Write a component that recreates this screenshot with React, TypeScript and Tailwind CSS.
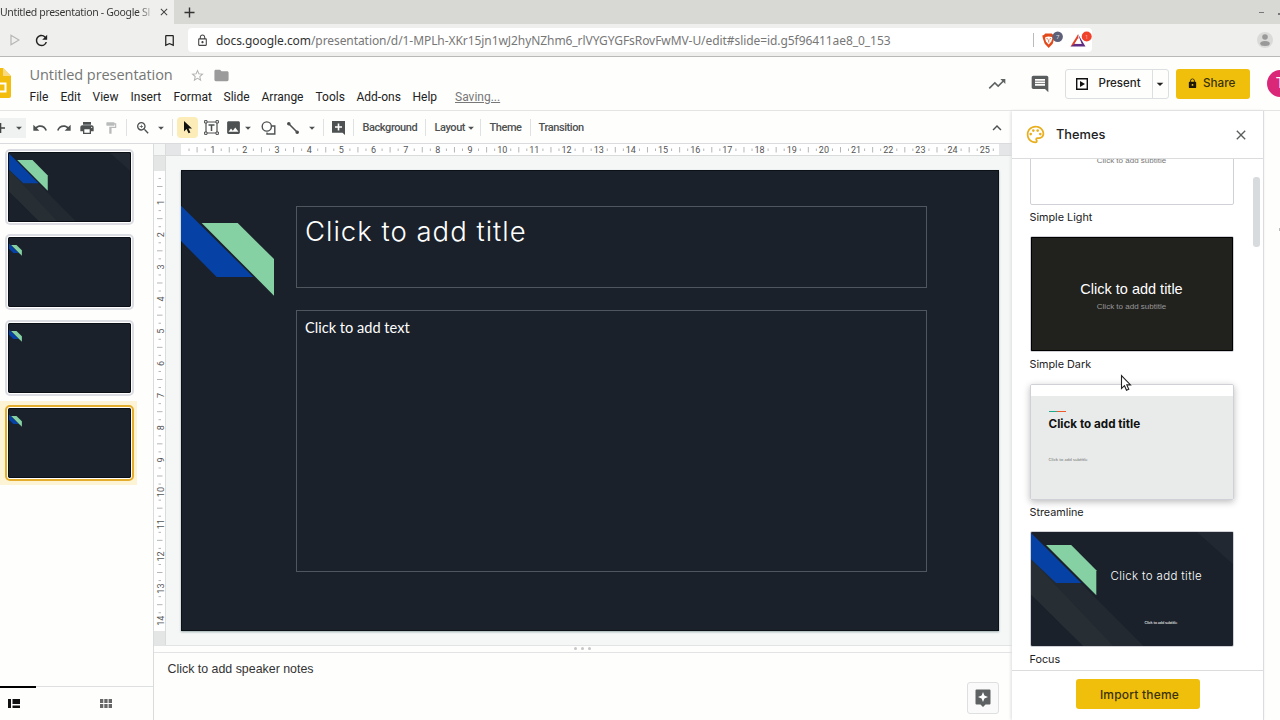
import type { ReactNode } from 'react';
import {
  MdArrowDropDown,
  MdBookmarkBorder,
  MdClose,
  MdExpandLess,
  MdFolder,
  MdFormatPaint,
  MdImage,
  MdInsertComment,
  MdLock,
  MdLockOutline,
  MdOutlinePalette,
  MdPrint,
  MdRedo,
  MdRefresh,
  MdStarBorder,
  MdTrendingUp,
  MdUndo,
  MdZoomIn,
} from 'react-icons/md';

const UNIT = 32.17;

const menus = [
  { label: 'File', width: 'w-[31px]' },
  { label: 'Edit', width: 'w-[32px]' },
  { label: 'View', width: 'w-[38px]' },
  { label: 'Insert', width: 'w-[43px]' },
  { label: 'Format', width: 'w-[50px]' },
  { label: 'Slide', width: 'w-[38px]' },
  { label: 'Arrange', width: 'w-[54px]' },
  { label: 'Tools', width: 'w-[41px]' },
  { label: 'Add-ons', width: 'w-[56px]' },
  { label: 'Help', width: 'w-[42.500px]' },
];

function BrowserChrome() {
  return (
    <div className="h-[57px] shrink-0 border-b border-[#b9bab8] bg-[#efefed] font-['Noto_Sans']">
      <div className="flex h-6 bg-[#d8d9d5]">
        <div className="flex w-[174px] items-center bg-[#efefed]">
          <span className="w-[153px] whitespace-nowrap bg-gradient-to-r from-[#333] from-90% to-[#ddd] bg-clip-text pt-px text-[10.5px] tracking-[-0.33px] text-transparent">
            Untitled presentation - Google Sl
          </span>
          <MdClose className="ml-[5px] h-3 w-3 text-[#444]" />
        </div>
        <svg className="ml-[10px] mt-[7px] h-[11px] w-[11px]" viewBox="0 0 11 11" stroke="#333" strokeWidth="1.4">
          <path d="M5.5 0.5v10M0.5 5.5h10" />
        </svg>
        <span className="ml-auto mr-[14px] mt-3 h-px w-[5px] bg-[#777]" />
        <span className="-mr-px mt-[13px] h-[2px] w-[3px] bg-[#777]" />
      </div>
      <div className="flex h-8 items-center">
        <svg className="ml-[10px] h-3 w-[10px]" viewBox="0 0 10 12" fill="none" stroke="#b5b5b5" strokeWidth="1.2">
          <path d="M1 1.2v9.6L9 6z" />
        </svg>
        <MdRefresh className="ml-[13px] h-[17px] w-[17px] text-[#222]" />
        <MdBookmarkBorder className="ml-[112px] h-[15px] w-[15px] text-[#222]" />
        <div className="ml-[11px] flex h-6 w-[904px] items-center rounded-sm bg-white">
          <MdLockOutline className="ml-[8px] h-[13px] w-[13px] text-[#444]" />
          <span className="ml-[7px] whitespace-nowrap pt-px text-[12px] tracking-[-0.07px] text-[#777]">
            <span className="text-[#333]">docs.google.com</span>
            /presentation/d/1-MPLh-XKr15jn1wJ2hyNZhm6_rlVYGYGFsRovFwMV-U/edit#slide=id.g5f96411ae8_0_153
          </span>
          <span className="ml-auto h-[14px] w-px bg-[#bbb]" />
          <svg className="ml-[8px] h-[18px] w-[24px]" viewBox="0 0 24 18">
            <path d="M3.300 2.500h6.600l1.300 1.500 1.600.3-.6 3.200-1.500 5.300L6.700 17l-4-4.200L.9 7.500.3 4.500l1.600-.5z" fill="#e24a1c" />
            <path d="M3.500 6l3.200-.6L10 6l.3 1.500-1 3L6.700 13.500 4 10.500l-.9-3z" fill="#fff" />
            <path d="M4.500 7.500l1.500.6M9 7.500l-1.500.6M6.700 8.500v3" stroke="#e24a1c" strokeWidth=".8" />
            <circle cx="15.700" cy="5.700" r="5.200" fill="#5d6079" />
            <text x="14" y="8" fontSize="6" fill="#ddd">7</text>
          </svg>
          <svg className="ml-[4px] h-[18px] w-[22px]" viewBox="0 0 22 18">
            <path d="M8.200 3.500L15.500 15.500H0.500l3-2.800h8z" fill="#612c83" />
            <path d="M8.200 3L.5 15.500l4.300-2.800 3.600-5.500z" fill="#e2452a" />
            <path d="M8.200 7l3.600 5.700H4.600z" fill="#fff" />
            <circle cx="16.700" cy="5.500" r="5" fill="#f0412b" />
            <text x="15.200" y="7.500" fontSize="5" fill="#fbb">1</text>
          </svg>
        </div>
        <svg className="ml-auto mr-[7px] h-4 w-4" viewBox="0 0 16 16">
          <circle cx="8" cy="8" r="8" fill="#dadad8" />
          <circle cx="8" cy="5" r="2.800" fill="#999" />
          <ellipse cx="8" cy="11.500" rx="4.800" ry="2.500" fill="#999" />
        </svg>
      </div>
    </div>
  );
}

function Header() {
  return (
    <div className="flex h-[54px] shrink-0 border-b border-[#e3e5e5]">
      <svg className="mt-[11px] h-[31px] w-3" viewBox="0 0 12 31">
        <path d="M0 0h3l8 8v20q0 2-2 2H0z" fill="#f2bd0c" />
        <path d="M3 0l8 8H3z" fill="#f9da80" />
        <path d="M0 15.500h5.500v8H0" fill="none" stroke="#fff" strokeWidth="2" />
      </svg>
      <div className="ml-[17.500px]">
        <div className="flex h-[30px] items-center pt-[6px]">
          <span className="w-[143px] whitespace-nowrap font-['Open_Sans'] text-[14.500px] tracking-[-0.06px] text-[#757775]">
            Untitled presentation
          </span>
          <MdStarBorder className="ml-[17px] h-[15px] w-[15px] text-[#b3b3b3]" />
          <MdFolder className="ml-[8px] h-[17px] w-[17px] text-[#9b9b9b]" />
        </div>
        <div className="flex h-5 items-center font-['Roboto'] text-[12px] text-[#222]">
          {menus.map((menu) => (
            <span key={menu.label} className={`${menu.width} whitespace-nowrap`}>
              {menu.label}
            </span>
          ))}
          <span className="text-[#777] underline">Saving...</span>
        </div>
      </div>
      <div className="ml-auto flex items-center">
        <MdTrendingUp className="h-[20px] w-[20px] text-[#5f6363]" />
        <MdInsertComment className="ml-[23px] h-[20px] w-[20px] text-[#5a5d5d]" />
        <div className="ml-[15px] flex h-[30px] w-[104px] items-center rounded-[3px] border border-[#dcdfe1] font-['Inter'] text-[11.500px] font-medium text-[#222]">
          <svg className="ml-[10px] h-3 w-3" viewBox="0 0 12 12">
            <path d="M.7.7h10.600v10.600H.7z" fill="none" stroke="#111" strokeWidth="1.400" />
            <path d="M4 3l5 3-5 3z" fill="#111" />
          </svg>
          <span className="ml-[10.500px] w-[53.500px]">Present</span>
          <span className="flex h-full w-4 items-center border-l border-[#dcdfe1]">
            <MdArrowDropDown className="-ml-px h-4 w-4 shrink-0" />
          </span>
        </div>
        <div className="ml-[7px] flex h-[30px] w-[74px] items-center rounded-[3px] bg-[#f0bf0c] font-['Inter'] text-[11.700px] font-medium text-[#3a3208]">
          <MdLock className="ml-[11px] h-[11px] w-[11px] text-[#1c1804]" />
          <span className="ml-[5px]">Share</span>
        </div>
        <div className="-mr-[14px] ml-[17px] flex h-[27px] w-[27px] items-center rounded-full bg-[#db2777] pl-[9px] font-['Roboto'] text-[14px] text-white">
          T
        </div>
      </div>
    </div>
  );
}

function Divider({ className }: { className: string }) {
  return <span className={`h-[17px] w-px shrink-0 bg-[#dfe1e2] ${className}`} />;
}

function Toolbar() {
  return (
    <div className="flex h-[33px] shrink-0 items-center whitespace-nowrap border-b border-[#d9dbdc] pt-px font-['Roboto'] text-[11px] font-medium tracking-[-0.42px] text-[#4e5151]">
      <div className="flex h-[20px] w-[26px] shrink-0 items-center bg-[#f0f1f1]">
        <svg className="h-[10px] w-[5px]" viewBox="0 0 5 10" stroke="#444" strokeWidth="1.600">
          <path d="M0 5h5M0.500 0v10" />
        </svg>
        <MdArrowDropDown className="ml-[7px] h-[14px] w-[14px] shrink-0" />
      </div>
      <MdUndo className="ml-[6px] h-4 w-4 shrink-0" />
      <MdRedo className="ml-[8px] h-4 w-4 shrink-0" />
      <MdPrint className="ml-[7px] h-4 w-4 shrink-0" />
      <MdFormatPaint className="ml-[9px] h-[14px] w-[14px] shrink-0 text-[#b9bbbb]" />
      <Divider className="ml-[8px]" />
      <MdZoomIn className="ml-[8px] h-4 w-4 shrink-0" />
      <MdArrowDropDown className="ml-[3px] h-[14px] w-[14px] shrink-0" />
      <Divider className="ml-[4px]" />
      <span className="ml-[4px] flex h-[21px] w-[21px] shrink-0 items-center justify-center rounded-sm bg-[#fbecb8]">
        <svg className="h-[13px] w-[10px]" viewBox="0 0 10 13">
          <path d="M1 0v10.500l2.600-2.400 1.900 4.200 1.900-.9-1.900-4h3.500z" fill="#111" />
        </svg>
      </span>
      <svg className="ml-[6px] h-[15px] w-[15px] shrink-0" viewBox="0 0 15 15" fill="none" stroke="#4e5151">
        <path d="M2 2h11v11H2z" strokeWidth="1.200" />
        <path d="M.6.6h2.400v2.400H.6zM12 .6h2.400v2.400H12zM.6 12h2.400v2.400H.6zM12 12h2.400v2.400H12z" fill="#fff" />
        <path d="M4.500 5h6M7.500 5v6" strokeWidth="1.500" />
      </svg>
      <MdImage className="ml-[6px] h-[17px] w-[17px] shrink-0" />
      <MdArrowDropDown className="-ml-px h-[14px] w-[14px] shrink-0" />
      <svg className="ml-[6px] h-[14px] w-[15px] shrink-0" viewBox="0 0 15 14" fill="none" stroke="#4e5151" strokeWidth="1.400">
        <circle cx="5.800" cy="5.500" r="4.600" />
        <path d="M12 5h1.800v8H6v-1.500M10.500 5h3" />
      </svg>
      <svg className="ml-[11px] h-[12px] w-[12px] shrink-0" viewBox="0 0 12 12" stroke="#4e5151" strokeWidth="1.600">
        <path d="M1.500 1.500l9 9" />
        <circle cx="1.800" cy="1.800" r="1" />
        <circle cx="10.200" cy="10.200" r="1" />
      </svg>
      <MdArrowDropDown className="ml-[6px] h-[14px] w-[14px] shrink-0" />
      <Divider className="ml-[4px]" />
      <svg className="ml-[8px] h-[14px] w-[13px] shrink-0" viewBox="0 0 13 14">
        <path d="M0 0h13v14l-2.500-2.300H0z" fill="#4e5151" />
        <path d="M6.500 2.500v7M3 6h7" stroke="#fff" strokeWidth="1.600" />
      </svg>
      <Divider className="ml-[8px]" />
      <span className="ml-[8.500px] w-[54px] pt-px">Background</span>
      <Divider className="ml-[8px]" />
      <span className="ml-[9px] w-[31px] pt-px">Layout</span>
      <MdArrowDropDown className="-ml-[2px] h-[14px] w-[14px] shrink-0" />
      <Divider className="ml-[2px]" />
      <span className="ml-[9px] w-[31px] pt-px">Theme</span>
      <Divider className="ml-[9px]" />
      <span className="ml-[8px] pt-px">Transition</span>
      <MdExpandLess className="ml-auto mr-[6px] h-[18px] w-[18px]" />
    </div>
  );
}

// Diagonal ribbons of the Focus title layout.
function FocusArt({ className }: { className: string }) {
  return (
    <svg className={className} viewBox="0 0 201 113" preserveAspectRatio="none">
      <rect width="201" height="113" fill="#1a212a" />
      <path d="M0 1v61l52 51h60z" fill="#222931" />
      <path d="M0 27v35l52 51h30z" fill="#272e34" />
      <path d="M165 0h36v32z" fill="#212831" />
      <path d="M0 1v26l25 23.500h25z" fill="#0641a5" />
      <path d="M15 13h25l25 25v24.700z" fill="#86d1a4" />
    </svg>
  );
}

function CornerArt({ className }: { className: string }) {
  return (
    <svg className={className} viewBox="0 0 94 126">
      <path d="M0 35.700V71l35.700 36h36.600z" fill="#0641a5" />
      <path d="M20.700 53h36L93 89v36.700z" fill="#86d1a4" />
    </svg>
  );
}

function SlideThumb({ selected, children }: { selected?: boolean; children: ReactNode }) {
  return (
    <div className={`w-[137px] py-1 pl-[5px] ${selected ? 'bg-[#fdf4d6]' : ''}`}>
      <div
        className={`h-[76px] w-[129px] rounded-[5px] border-2 bg-white p-px ${
          selected ? 'border-[#e5ad2c]' : 'border-[#dcdde3]'
        }`}
      >
        <div className="h-full overflow-hidden rounded-[2px] bg-[#1a212a] outline-1 -outline-offset-1 outline-[#0b0f16]">{children}</div>
      </div>
    </div>
  );
}

function Filmstrip() {
  return (
    <div className="flex w-[154px] shrink-0 flex-col border-r border-[#d9dbdc]">
      <div className="flex flex-1 flex-col gap-[1.400px] pt-px">
        <SlideThumb>
          <FocusArt className="h-full w-full" />
        </SlideThumb>
        <SlideThumb>
          <CornerArt className="h-[19px] w-[14px]" />
        </SlideThumb>
        <SlideThumb>
          <CornerArt className="h-[19px] w-[14px]" />
        </SlideThumb>
        <SlideThumb selected>
          <CornerArt className="h-[19px] w-[14px]" />
        </SlideThumb>
      </div>
      <div className="flex h-[34px] border-t border-[#dddfe0]">
        <div className="-mt-px w-9 border-t-2 border-black">
          <svg className="ml-[8px] mt-[11px] h-[9px] w-3" viewBox="0 0 12 9" fill="#111">
            <path d="M0 0h3v9H0zM4.500 0H12v5H4.500zM4.500 6.500H12V9H4.500z" />
          </svg>
        </div>
        <svg className="ml-[64px] mt-[12px] h-[9px] w-3" viewBox="0 0 12 9" fill="#666">
          <path d="M0 0h3.300v4H0zM4.300 0h3.300v4H4.300zM8.600 0H12v4H8.600zM0 5h3.300v4H0zM4.300 5h3.300v4H4.300zM8.600 5H12v4H8.600z" />
        </svg>
      </div>
    </div>
  );
}

function RulerTicks({ count }: { count: number }) {
  return (
    <>
      {Array.from({ length: count }, (_, i) => {
        const x = i * UNIT;
        return (
          <g key={i} stroke="#b3b6b6">
            <path d={`M${x + UNIT / 4} 4.500v2.500M${x + UNIT / 2} 3v5.500M${x + (UNIT * 3) / 4} 4.500v2.500`} />
            <text
              x={x + UNIT - 0.5}
              y="8.500"
              stroke="none"
              fill="#555"
              fontSize="9"
              textAnchor="middle"
              className="font-['Roboto']"
            >
              {i + 1}
            </text>
          </g>
        );
      })}
    </>
  );
}

function HorizontalRuler() {
  return (
    <div className="flex h-3 border-b border-[#dadcdc]">
      <div className="w-3 border-r border-[#dadcdc] bg-[#f4f5f5]" />
      <div className="w-[15px] bg-[#e4e6e7]" />
      <svg className="h-[11px] w-[818px] bg-white" viewBox="0 0 818 11">
        <RulerTicks count={25} />
        <path d={`M${25.25 * UNIT} 4.500v2.500`} stroke="#b3b6b6" />
      </svg>
      <div className="flex-1 bg-[#e4e6e7]" />
    </div>
  );
}

function VerticalRuler() {
  return (
    <div className="flex w-3 flex-col border-r border-[#dadcdc]">
      <div className="h-[15px] bg-[#e4e6e6]" />
      <svg className="h-[460px] w-[11px] bg-white" viewBox="0 0 11 460">
        {Array.from({ length: 14 }, (_, i) => {
          const y = i * UNIT - 0.6;
          return (
            <g key={i} stroke="#b3b6b6">
              <path d={`M4.500 ${y + UNIT / 4}h2.500M3 ${y + UNIT / 2}h5.500M4.500 ${y + (UNIT * 3) / 4}h2.500`} />
              <text
                transform={`translate(9.500 ${y + UNIT}) rotate(-90)`}
                stroke="none"
                fill="#555"
                fontSize="9"
                textAnchor="middle"
                className="font-['Roboto']"
              >
                {i + 1}
              </text>
            </g>
          );
        })}
      </svg>
      <div className="flex-1 bg-[#e4e6e6]" />
    </div>
  );
}

function Editor() {
  return (
    <div className="flex w-[858px] flex-col">
      <HorizontalRuler />
      <div className="flex h-[489px] bg-[#f5f7f7]">
        <VerticalRuler />
        <div className="relative ml-[15px] mt-[14px] h-[461px] w-[818px] border border-[#0c1118] bg-[#1a212a] pl-[114px] pt-[35px] text-white shadow-[0_1px_2px_#9aa]">
          <CornerArt className="absolute -left-px -top-px h-[126px] w-[94px]" />
          <div className="h-[82px] w-[631px] border border-[#50565e] pl-[8px] pt-[6px] font-['Inter'] text-[27.500px] font-light leading-[37px] tracking-[1px]">
            Click to add title
          </div>
          <div className="mt-[22px] h-[262px] w-[631px] border border-[#50565e] pl-[8px] pt-[7px] font-['Lato'] text-[14.600px] leading-[19px]">
            Click to add text
          </div>
        </div>
      </div>
      <div className="flex h-[8px] items-center justify-center gap-[4px] border-b border-t border-[#e1e3e4] pb-px pr-px">
        <span className="h-[3px] w-[3px] rounded-full bg-[#c4c6c7]" />
        <span className="h-[3px] w-[3px] rounded-full bg-[#c4c6c7]" />
        <span className="h-[3px] w-[3px] rounded-full bg-[#c4c6c7]" />
      </div>
      <div className="flex flex-1 justify-between pl-[13.500px] pr-[13px]">
        <span className="pt-[8px] font-['Liberation_Sans'] text-[12.400px] leading-4 text-[#333]">
          Click to add speaker notes
        </span>
        <div className="mt-[29px] flex h-8 w-8 items-center justify-center rounded-[3px] border border-[#dee0e0] bg-[#fafafa]">
          <svg className="h-[18px] w-4" viewBox="0 0 16 18">
            <path d="M1.500.5h13q1 0 1 1v13q0 1-1 1h-4L8 18l-2.500-2.500h-4q-1 0-1-1v-13q0-1 1-1z" fill="#5e6161" />
            <path d="M8 3l1.400 3.600L13 8 9.400 9.400 8 13 6.600 9.400 3 8l3.600-1.400z" fill="#fff" />
          </svg>
        </div>
      </div>
    </div>
  );
}

function ThemeCard({ name, children, raised }: { name: string; children: ReactNode; raised?: boolean }) {
  return (
    <div className="h-[147.500px] shrink-0">
      <div
        className={`h-[116px] w-[204px] overflow-hidden rounded-[2px] border border-[#cfd1d6] ${
          raised ? 'shadow-[0_2px_7px_#bbb]' : ''
        }`}
      >
        {children}
      </div>
      <div className="mt-[5px] font-['Inter'] text-[10.800px] leading-4 text-[#222]">{name}</div>
    </div>
  );
}

function ThemesPanel() {
  return (
    <div className="flex w-[252px] shrink-0 flex-col border-r border-[#dadcdd] bg-white shadow-[-1px_0_3px_#ddd]">
      <div className="flex h-12 shrink-0 items-center border-b border-[#dadcdd]">
        <MdOutlinePalette className="ml-[13px] h-[21px] w-[21px] text-[#e8ae1c]" />
        <span className="ml-[10px] font-['Inter'] text-[12.800px] font-medium text-[#222]">Themes</span>
        <MdClose className="ml-auto mr-[14px] h-4 w-4 text-[#5a5d5d]" />
      </div>
      <div className="flex h-[512px] shrink-0 overflow-hidden border-b border-[#dadcdd] pl-[17.500px]">
        <div className="-mt-[70.500px] flex w-[204px] flex-col">
          <ThemeCard name="Simple Light">
            <div className="pt-[65px] text-center font-['Liberation_Sans'] text-[8px] leading-3 text-[#777]">
              Click to add subtitle
            </div>
          </ThemeCard>
          <ThemeCard name="Simple Dark">
            <div className="h-full border border-black bg-[#21211e] pt-[42px] text-center font-['Liberation_Sans'] text-[14.500px] leading-[18px] text-white">
              Click to add title
              <div className="pt-[3px] text-[8px] leading-3 text-[#999]">Click to add subtitle</div>
            </div>
          </ThemeCard>
          <ThemeCard name="Streamline" raised>
            <div className="h-full border-t-[11px] border-white bg-[#e8ebe9] pl-[18px] pt-[15px] font-['Lato']">
              <div className="flex">
                <span className="h-px w-2 bg-[#1fa98a]" />
                <span className="h-px w-[9px] bg-[#ee5a2c]" />
              </div>
              <div className="mt-[3px] font-['Inter'] text-[11.700px] font-bold leading-[18px] text-[#111]">
                Click to add title
              </div>
              <div className="mt-[24px] text-[4.500px] leading-[6px] text-[#777]">Click to add subtitle</div>
            </div>
          </ThemeCard>
          <ThemeCard name="Focus">
            <div className="relative h-full text-white">
              <FocusArt className="h-full w-full" />
              <span className="absolute left-[80px] top-[35.500px] whitespace-nowrap font-['Inter'] text-[11.500px] font-light leading-4 tracking-[0.35px]">
                Click to add title
              </span>
              <span className="absolute left-[114px] top-[87.500px] whitespace-nowrap font-['Lato'] text-[4px] leading-[6px] tracking-[-0.1px]">
                Click to add subtitle
              </span>
            </div>
          </ThemeCard>
        </div>
        <span className="ml-auto mr-[3px] mt-[18px] h-[70px] w-[7px] rounded-[3px] bg-[#d8dbde]" />
      </div>
      <div className="flex flex-1 justify-center pt-[8px]">
        <div className="flex h-[30px] w-[124px] items-center justify-center rounded-[3px] bg-[#f0bf0c] pl-[4px] pt-px font-['Inter'] text-[12px] font-medium tracking-[0.2px] text-[#3a3208]">
          Import theme
        </div>
      </div>
    </div>
  );
}

export default function App() {
  return (
    <div className="relative flex h-[720px] w-[1280px] flex-col overflow-hidden bg-[#fefefd]">
      <BrowserChrome />
      <Header />
      <div className="flex min-h-0 flex-1">
        <div className="flex w-[1012px] flex-col">
          <Toolbar />
          <div className="flex min-h-0 flex-1">
            <Filmstrip />
            <Editor />
          </div>
        </div>
        <ThemesPanel />
        <div className="flex flex-1 justify-end">
          <span className="mt-[117px] h-[3px] w-px bg-[#bbb]" />
        </div>
      </div>
      <svg className="absolute left-[1120px] top-[374px] h-[18px] w-3" viewBox="0 0 12 18">
        <path d="M1.500 1.500v13l3-2.800 2 4.600 2.300-1-2-4.400h3.700z" fill="#fff" stroke="#222" strokeWidth="1.100" />
      </svg>
    </div>
  );
}
